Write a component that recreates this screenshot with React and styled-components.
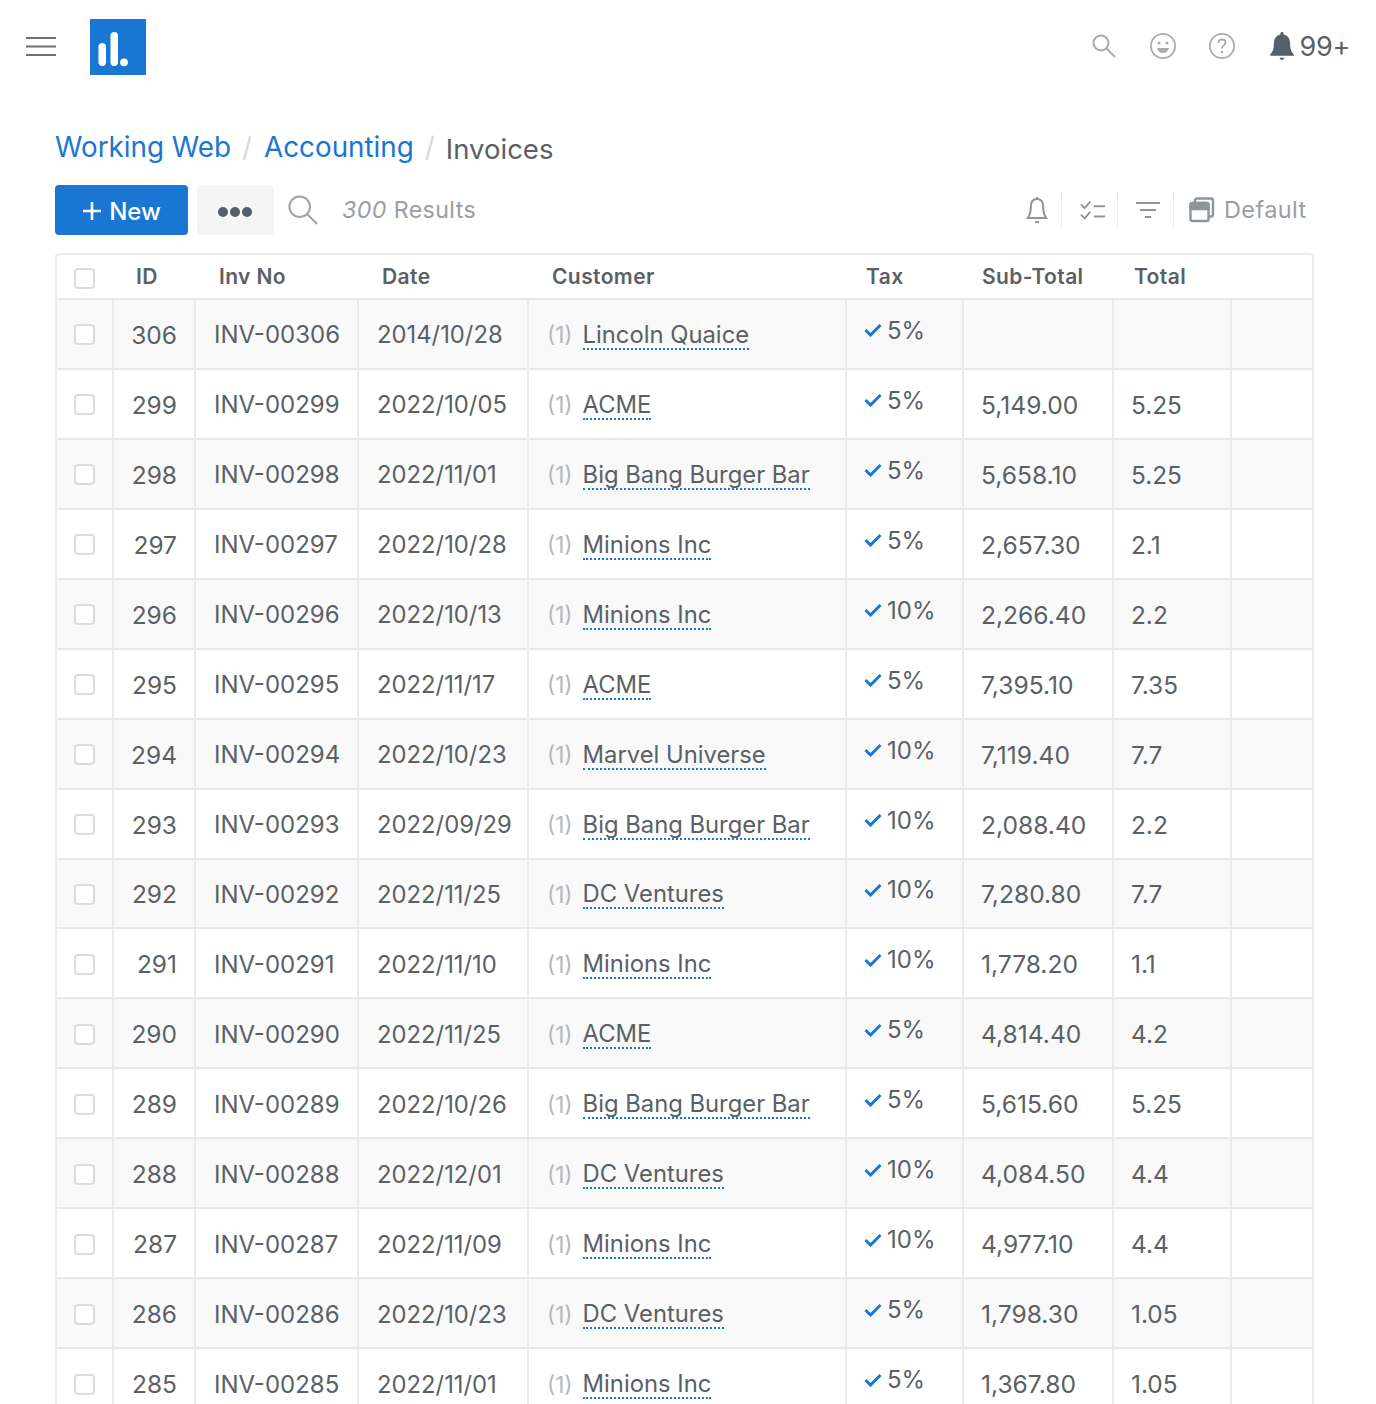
import React from 'react';
import styled, { createGlobalStyle } from 'styled-components';

const GlobalStyle = createGlobalStyle`
  html, body {
    margin: 0;
    height: 100%;
    overflow: hidden;
    background: #fff;
    font-family: Inter, "Liberation Sans", sans-serif;
    color: #5b6065;
  }
`;

const Page = styled.div`
  height: 1404px;
  overflow: hidden;
`;

const TopBar = styled.header`
  display: flex;
  align-items: center;
  height: 56px;
  padding: 19px 26px 0;
`;

const MenuIcon = styled.svg`
  width: 30px;
  height: 20px;
  margin-right: 34px;
`;

const Logo = styled.svg`
  width: 56px;
  height: 56px;
`;

const TopActions = styled.div`
  display: flex;
  align-items: center;
  margin-left: auto;
  margin-bottom: 3px;
`;

const TopIcon = styled.svg`
  width: ${(p) => p.$size || 26}px;
  height: ${(p) => p.$size || 26}px;
  margin-right: ${(p) => p.$gap}px;
`;

const Count = styled.span`
  font-size: 27px;
  letter-spacing: -0.3px;
  margin-left: 5px;
  margin-top: 2px;
  color: #5b6065;
`;

const Content = styled.main`
  padding: 0 62px 0 55px;
`;

const Crumbs = styled.nav`
  display: flex;
  align-items: baseline;
  margin-top: 52px;
  height: 40px;
  font-size: 27.8px;
  line-height: 40px;
`;

const Crumb = styled.a`
  color: #1976d2;
  text-decoration: none;
`;

const Slash = styled.span`
  color: #d8d8d8;
  margin: 0 12px 0 11px;
`;

const Current = styled.span`
  color: #5b6065;
  font-size: 27.5px;
  position: relative;
  top: 2px;
  margin-left: -1px;
`;

const Toolbar = styled.div`
  display: flex;
  align-items: center;
  height: 50px;
  margin-top: 18px;
`;

const NewButton = styled.button`
  display: flex;
  align-items: center;
  justify-content: center;
  gap: 7px;
  width: 133px;
  height: 50px;
  border: 0;
  border-radius: 4px;
  background: #1976d2;
  color: #fff;
  font: 500 24px Inter, sans-serif;
  padding: 2px 0 0;
`;

const MoreButton = styled.button`
  display: flex;
  align-items: center;
  justify-content: center;
  width: 77px;
  height: 50px;
  margin-left: 9px;
  border: 0;
  border-radius: 4px;
  background: #f5f5f5;
  padding: 3px 1px 0 0;
`;

const SearchIcon = styled.svg`
  width: 30px;
  height: 30px;
  margin-left: 14px;
`;

const Results = styled.div`
  margin-left: 24px;
  font-size: 23.2px;
  letter-spacing: 0.4px;
  color: #9a9ea3;

  em {
    font-style: italic;
  }
`;

const ViewTools = styled.div`
  display: flex;
  align-items: center;
  margin-left: auto;
`;

const ToolCell = styled.div`
  display: flex;
  align-items: center;
  justify-content: ${(p) => (p.$last ? 'flex-start' : 'center')};
  box-sizing: border-box;
  width: ${(p) => p.$w}px;
  height: 36px;
  padding-left: ${(p) => p.$pad || 0}px;
  border-right: ${(p) => (p.$last ? '0' : '1.5px dotted #dcdcdc')};
`;

const ToolIcon = styled.svg`
  width: 26px;
  height: 28px;
`;

const ViewName = styled.span`
  font-size: 23.5px;
  letter-spacing: 0.4px;
  color: #9a9ea3;
  margin: 0 0 2px 9px;
`;

const Table = styled.div`
  margin-top: 18px;
  border: 2px solid #ececec;
  border-bottom: 0;
  border-radius: 4px 4px 0 0;
  width: 1255px;
`;

const columns = '57px 82px 163px 170px 318px 117px 150px 118px 1fr';

const HeadRow = styled.div`
  display: grid;
  grid-template-columns: ${columns};
  height: 43px;
  align-items: center;
  border-bottom: 2px solid #e8e8e8;
`;

const HeadCell = styled.div`
  font-size: 21px;
  font-weight: 600;
  letter-spacing: 0.4px;
  color: #5b6065;
  padding-left: ${(p) => p.$pad}px;
`;

const Row = styled.div`
  display: grid;
  grid-template-columns: ${columns};
  height: 69.94px;
  box-sizing: border-box;
  border-bottom: 2px solid #e8e8e8;
  background: ${(p) => (p.$odd ? '#f9f9f9' : '#fff')};
`;

const Cell = styled.div`
  display: flex;
  align-items: center;
  box-sizing: border-box;
  font-size: ${(p) => p.$size || 24}px;
  padding: 2px 0 0 ${(p) => p.$pad || 18}px;
  border-right: 2px solid #ebebeb;
  white-space: nowrap;

  &:last-child {
    border-right: 0;
  }
`;

const IdCell = styled(Cell)`
  justify-content: flex-end;
  padding: 2px 17px 0 0;
`;

const BoxCell = styled(Cell)`
  justify-content: center;
  padding: 2px 0 0;
`;

const HeadBox = styled.div`
  display: flex;
  justify-content: center;
  padding-right: 2px;
`;

const Checkbox = styled.span`
  display: block;
  width: 21px;
  height: 21px;
  box-sizing: border-box;
  border: 2px solid #dcdcdc;
  border-radius: 4px;
  background: #fff;
  margin-top: ${(p) => p.$top || 0}px;
`;

const Seq = styled.span`
  font-size: 22.5px;
  color: #b5b8bb;
  margin-right: 10px;
`;

const CustomerLink = styled.a`
  color: #5b6065;
  font-size: 23.8px;
  line-height: 26px;
  padding-top: 2px;
  border-bottom: 2px dotted #1976d2;
`;

const TaxCell = styled(Cell)`
  padding: 0 0 7px 17px;
  font-size: 24px;
`;

const TickIcon = styled.svg`
  width: 18px;
  height: 14px;
  margin-right: 5px;
`;

const rows = [
  [306, '2014/10/28', 'Lincoln Quaice', '5%', '', ''],
  [299, '2022/10/05', 'ACME', '5%', '5,149.00', '5.25'],
  [298, '2022/11/01', 'Big Bang Burger Bar', '5%', '5,658.10', '5.25'],
  [297, '2022/10/28', 'Minions Inc', '5%', '2,657.30', '2.1'],
  [296, '2022/10/13', 'Minions Inc', '10%', '2,266.40', '2.2'],
  [295, '2022/11/17', 'ACME', '5%', '7,395.10', '7.35'],
  [294, '2022/10/23', 'Marvel Universe', '10%', '7,119.40', '7.7'],
  [293, '2022/09/29', 'Big Bang Burger Bar', '10%', '2,088.40', '2.2'],
  [292, '2022/11/25', 'DC Ventures', '10%', '7,280.80', '7.7'],
  [291, '2022/11/10', 'Minions Inc', '10%', '1,778.20', '1.1'],
  [290, '2022/11/25', 'ACME', '5%', '4,814.40', '4.2'],
  [289, '2022/10/26', 'Big Bang Burger Bar', '5%', '5,615.60', '5.25'],
  [288, '2022/12/01', 'DC Ventures', '10%', '4,084.50', '4.4'],
  [287, '2022/11/09', 'Minions Inc', '10%', '4,977.10', '4.4'],
  [286, '2022/10/23', 'DC Ventures', '5%', '1,798.30', '1.05'],
  [285, '2022/11/01', 'Minions Inc', '5%', '1,367.80', '1.05'],
];

const heads = [
  ['ID', 22],
  ['Inv No', 23],
  ['Date', 23],
  ['Customer', 23],
  ['Tax', 19],
  ['Sub-Total', 18],
  ['Total', 20],
];

const grey = '#a9acaf';
const toolGrey = '#8f9498';

export default function App() {
  return (
    <Page>
      <GlobalStyle />
      <TopBar>
        <MenuIcon viewBox="0 0 30 20" fill="none" stroke="#6b7075" strokeWidth="2">
          <path d="M0 1h30M0 9.5h30M0 18h30" />
        </MenuIcon>
        <Logo viewBox="0 0 56 56">
          <rect width="56" height="56" fill="#1976d2" />
          <g fill="#fff">
            <rect x="8.5" y="24" width="7.500" height="23" rx="3.7" />
            <rect x="20.500" y="13" width="7.500" height="34" rx="3.7" />
            <circle cx="34" cy="43.3" r="3.9" />
          </g>
        </Logo>
        <TopActions>
          <TopIcon $gap={33} viewBox="0 0 26 26" fill="none" stroke={grey} strokeWidth="2">
            <circle cx="10" cy="10" r="7.5" />
            <path d="M15.5 15.5L24 24" />
          </TopIcon>
          <TopIcon $gap={33} viewBox="0 0 26 26" fill="none" stroke={grey} strokeWidth="1.8">
            <circle cx="13" cy="13" r="12.1" />
            <circle cx="9" cy="10" r="1.5" fill={grey} stroke="none" />
            <circle cx="17" cy="10" r="1.5" fill={grey} stroke="none" />
            <path d="M7 15h12c-.8 3.300-3 5-6 5s-5.200-1.700-6-5z" fill={grey} stroke="none" />
          </TopIcon>
          <TopIcon $gap={32} viewBox="0 0 26 26" fill="none" stroke={grey} strokeWidth="1.8">
            <circle cx="13" cy="13" r="12.1" />
            <path d="M9.500 10c0-2.200 1.600-3.500 3.600-3.500s3.400 1.300 3.400 3.100c0 2.800-3.500 2.700-3.500 5.900" />
            <circle cx="13" cy="19" r="1.200" fill={grey} stroke="none" />
          </TopIcon>
          <TopIcon $size={30} $gap={-2} viewBox="0 0 26 28" fill="#555f69">
            <path d="M13 1c.9 0 1.500.6 1.500 1.500v.7c3.900.8 6 4 6 8.300 0 5 1 8 3.500 10.500v1H2v-1C4.500 19.500 5.500 16.500 5.500 11.500c0-4.300 2.100-7.500 6-8.300v-.7C11.500 1.600 12.100 1 13 1z" />
            <path d="M10.800 25h4.400c-.3 1.200-1.100 2-2.200 2s-1.900-.8-2.200-2z" />
          </TopIcon>
          <Count>99+</Count>
        </TopActions>
      </TopBar>
      <Content>
        <Crumbs>
          <Crumb href="#">Working Web</Crumb>
          <Slash>/</Slash>
          <Crumb href="#">Accounting</Crumb>
          <Slash>/</Slash>
          <Current>Invoices</Current>
        </Crumbs>
        <Toolbar>
          <NewButton>
            <svg width="20" height="20" viewBox="0 0 20 20" stroke="#fff" strokeWidth="2.600">
              <path d="M10 1v18M1 10h18" />
            </svg>
            New
          </NewButton>
          <MoreButton>
            <svg width="36" height="12" viewBox="0 0 36 12" fill="#555f69">
              <circle cx="6" cy="6" r="5" />
              <circle cx="18" cy="6" r="5" />
              <circle cx="30" cy="6" r="5" />
            </svg>
          </MoreButton>
          <SearchIcon viewBox="0 0 32 32" fill="none" stroke="#a3a6a9" strokeWidth="2.200">
            <circle cx="12.500" cy="12.500" r="11" />
            <path d="M20.500 20.500L31 31" />
          </SearchIcon>
          <Results>
            <em>300</em> Results
          </Results>
          <ViewTools>
            <ToolCell $w={56} $pad={6}>
              <ToolIcon viewBox="0 0 26 28" fill="none" stroke={toolGrey} strokeWidth="2">
                <path d="M13 3c-4.200 0-6.200 3.500-6.200 8 0 5-.8 8-3 11h18.400c-2.200-3-3-6-3-11 0-4.500-2-8-6.200-8z" />
                <path d="M13 1v2M11 26h4" />
              </ToolIcon>
            </ToolCell>
            <ToolCell $w={56} $pad={6}>
              <ToolIcon viewBox="0 0 28 28" fill="none" stroke={toolGrey} strokeWidth="2">
                <path d="M1 8l4 4 6-7M1 19l4 4 6-7M15 10h12M15 21h12" />
              </ToolIcon>
            </ToolCell>
            <ToolCell $w={56} $pad={4}>
              <ToolIcon viewBox="0 0 26 28" fill="none" stroke={toolGrey} strokeWidth="2">
                <path d="M1 7h24M5 14h16M10 21h6" />
              </ToolIcon>
            </ToolCell>
            <ToolCell $last $w={140} $pad={15}>
              <ToolIcon viewBox="0 0 26 26" fill="none" stroke={toolGrey} strokeWidth="2.400">
                <rect x="6" y="1.500" width="18" height="18" rx="2" />
                <rect x="1.500" y="6" width="18" height="18" rx="2" fill="#fff" />
                <path d="M1.500 8a2 2 0 0 1 2-2h14a2 2 0 0 1 2 2v4h-18z" fill={toolGrey} />
              </ToolIcon>
              <ViewName>Default</ViewName>
            </ToolCell>
          </ViewTools>
        </Toolbar>
        <Table>
          <HeadRow>
            <HeadBox>
              <Checkbox $top={3} />
            </HeadBox>
            {heads.map(([label, pad]) => (
              <HeadCell key={label} $pad={pad}>{label}</HeadCell>
            ))}
          </HeadRow>
          {rows.map((r, i) => (
            <Row key={r[0]} $odd={i % 2 === 0}>
              <BoxCell>
                <Checkbox />
              </BoxCell>
              <IdCell $size={24.5}>{r[0]}</IdCell>
              <Cell>INV-00{r[0]}</Cell>
              <Cell $size={23.8}>{r[1]}</Cell>
              <Cell>
                <Seq>(1)</Seq>
                <CustomerLink>{r[2]}</CustomerLink>
              </Cell>
              <TaxCell>
                <TickIcon viewBox="0 0 18 14" fill="none" stroke="#1976d2" strokeWidth="3">
                  <path d="M1.500 7l5 5L16.500 2" />
                </TickIcon>
                {r[3]}
              </TaxCell>
              <Cell $size={24.6} $pad={17}>{r[4]}</Cell>
              <Cell $size={24.4} $pad={17}>{r[5]}</Cell>
              <Cell />
            </Row>
          ))}
        </Table>
      </Content>
    </Page>
  );
}
